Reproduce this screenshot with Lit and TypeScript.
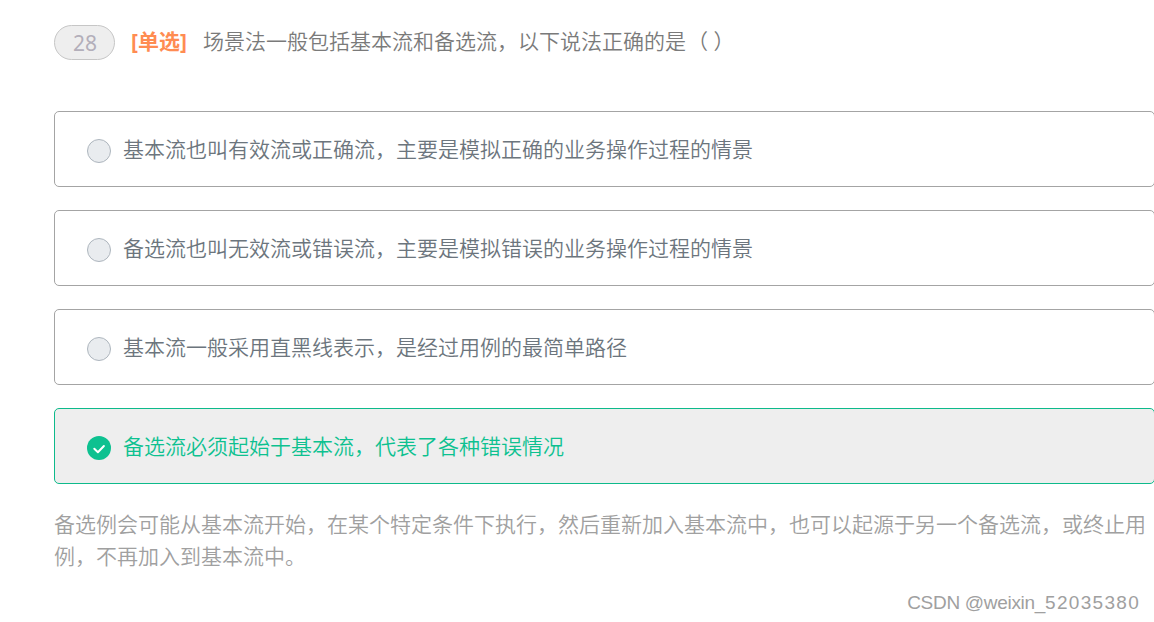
import { LitElement, html, css, svg } from "lit";
import { customElement } from "lit/decorators.js";
import { classMap } from "lit/directives/class-map.js";

interface Option { text: string; selected?: boolean; }

const options: Option[] = [
  { text: "基本流也叫有效流或正确流，主要是模拟正确的业务操作过程的情景" },
  { text: "备选流也叫无效流或错误流，主要是模拟错误的业务操作过程的情景" },
  { text: "基本流一般采用直黑线表示，是经过用例的最简单路径" },
  { text: "备选流必须起始于基本流，代表了各种错误情况", selected: true },
];

@customElement("app-root")
export class AppRoot extends LitElement {
  static styles = css`
    :host {
      display: block;
      position: relative;
      box-sizing: border-box;
      width: 1154px;
      height: 622px;
      padding: 25px 0 0 54px;
      overflow: hidden;
      background: #fff;
      font-family: "Noto Sans", "Noto Sans CJK SC", sans-serif;
      font-size: 21px;
      font-weight: 350;
      white-space: nowrap;
    }
    .question { display: flex; align-items: flex-start; height: 35px; line-height: 32px; color: #7a7a7a; }
    .number {
      box-sizing: border-box;
      width: 61px;
      height: 35px;
      padding-left: 1px;
      line-height: 35px;
      border: 1px solid #c6c6c6;
      border-radius: 18px;
      background: #eee;
      color: #b3afba;
      text-align: center;
      font-weight: 400;
    }
    .kind { margin-left: 16px; width: 72px; color: #ff8c52; font-weight: 700; }
    .blank { margin-left: 1px; }
    .options { display: flex; flex-direction: column; gap: 23px; margin: 51px -1px 0 0; }
    .option {
      box-sizing: border-box;
      display: flex;
      align-items: center;
      height: 76px;
      padding-left: 32px;
      border: 1px solid #a4a4a4;
      border-radius: 5px;
      color: #6c757d;
    }
    .option.selected { border-color: #0dba8b; background: #eee; color: #0dc190; }
    .mark { flex: none; width: 24px; height: 24px; margin: 4px 12px 0 0; }
    .ring { fill: #e9ecef; stroke: #adb5bd; }
    .disc { fill: #0dc190; }
    .tick { fill: none; stroke: #fff; stroke-width: 2; stroke-linecap: round; stroke-linejoin: round; }
    .label { line-height: 32px; }
    .note { margin: 24px 0 0; line-height: 32px; color: #a0a0a0; }
    .watermark {
      position: absolute;
      right: 14px;
      bottom: 5px;
      font-family: "Liberation Sans", sans-serif;
      font-size: 19px;
      font-weight: 400;
      line-height: 28px;
      letter-spacing: -0.3px;
      color: #a0a0a0;
    }
    .digits { letter-spacing: 1.3px; }
  `;

  private mark(selected = false) {
    return html`<svg class="mark" viewBox="0 0 24 24">
      ${selected
        ? svg`<circle class="disc" cx="12" cy="12" r="12"/><path class="tick" d="M7.3 12.8l3.6 3.4L16.9 10"/>`
        : svg`<circle class="ring" cx="12" cy="12" r="11.5"/>`}
    </svg>`;
  }

  render() {
    return html`
      <div class="question">
        <span class="number">28</span>
        <span class="kind">[单选]</span>
        <span class="title">场景法一般包括基本流和备选流，以下说法正确的是<span class="blank">（ ）</span></span>
      </div>
      <div class="options">
        ${options.map((o) => html`<div class=${classMap({ option: true, selected: !!o.selected })}>
          ${this.mark(o.selected)}<span class="label">${o.text}</span>
        </div>`)}
      </div>
      <p class="note">备选例会可能从基本流开始，在某个特定条件下执行，然后重新加入基本流中，也可以起源于另一个备选流，或终止用<br>例，不再加入到基本流中。</p>
      <div class="watermark">CSDN @weixin_<span class="digits">52035380</span></div>
    `;
  }
}
